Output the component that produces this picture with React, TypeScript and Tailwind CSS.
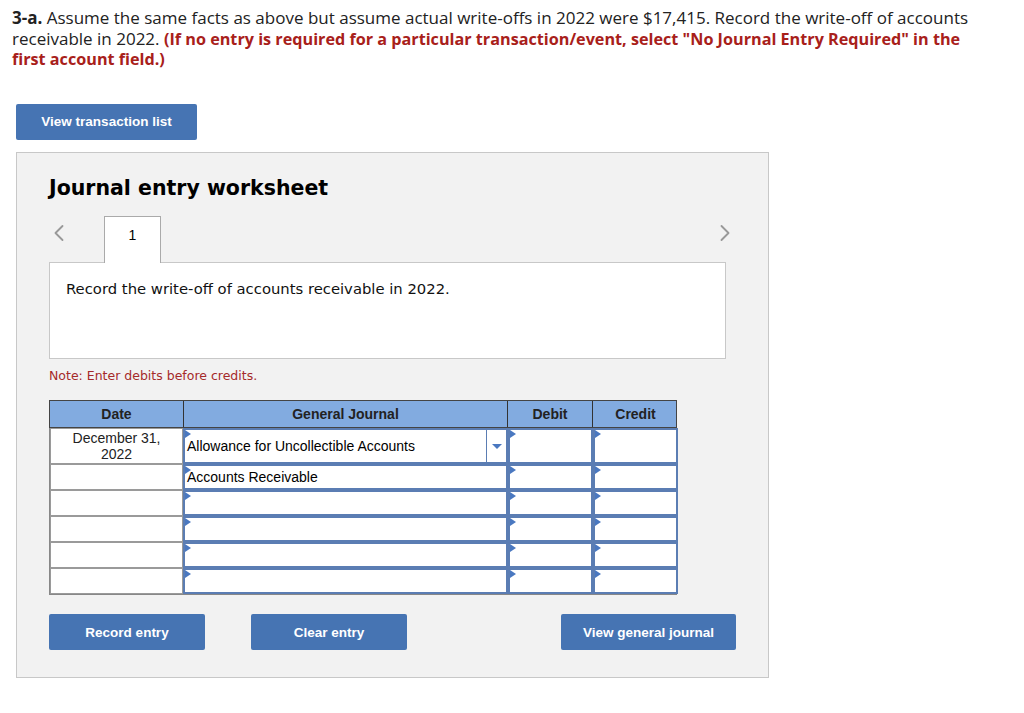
import { ChevronLeft, ChevronRight } from "lucide-react";

const rows = [
  { date: ["December 31,", "2022"], account: "Allowance for Uncollectible Accounts", dropdown: true },
  { date: null, account: "Accounts Receivable" },
  { date: null, account: "" },
  { date: null, account: "" },
  { date: null, account: "" },
  { date: null, account: "" },
];

function Marker() {
  return (
    <span className="absolute left-0 top-0 h-0 w-0 border-y-[4px] border-l-[6px] border-y-transparent border-l-[#4a78c0]" />
  );
}

function InputCell({ children, tall }: { children?: React.ReactNode; tall?: boolean }) {
  return (
    <div
      className={
        "relative flex items-center border-2 border-[#5b7db3] bg-white " + (tall ? "h-[36px]" : "h-[26px]")
      }
    >
      <Marker />
      {children}
    </div>
  );
}

function BlueButton({ label, className }: { label: string; className?: string }) {
  return (
    <button
      type="button"
      className={
        "flex h-[36px] items-center justify-center rounded-[2px] bg-[#4674b3] pt-[2px] text-[13.5px] font-bold text-white " +
        (className ?? "")
      }
      style={{ fontFamily: "'Liberation Sans', Arial, sans-serif" }}
    >
      {label}
    </button>
  );
}

export default function App() {
  return (
    <div className="min-h-[713px] w-[1024px] bg-white">
      <div
        className="px-[12px] pt-[8px] text-[17px] leading-[20.5px] text-[#222]"
        style={{ fontFamily: "'Open Sans', Lato, sans-serif" }}
      >
        <b>3-a.</b> Assume the same facts as above but assume actual write-offs in 2022 were $17,415. Record the
        write-off of accounts
        <br />
        receivable in 2022.{" "}
        <b className="text-[16.2px] text-[#a8201a]">
          (If no entry is required for a particular transaction/event, select "No Journal Entry Required" in the
          <br />
          first account field.)
        </b>
      </div>

      <div className="ml-[16px] mt-[34px]">
        <BlueButton label="View transaction list" className="w-[181px]" />
      </div>

      <div
        className="ml-[16px] mt-[12px] w-[753px] border border-[#c8c8c8] bg-[#f2f2f2] pb-[27px] pl-[32px] pt-[22px]"
        style={{ fontFamily: "'DejaVu Sans', Verdana, sans-serif" }}
      >
        <h2 className="text-[20.5px] font-bold leading-[26px] text-black">Journal entry worksheet</h2>

        <div className="mt-[15px] flex w-[676px] items-end">
          <div className="flex h-[46px] w-[55px] items-center pb-[12px]">
            <ChevronLeft className="-ml-[4px] h-[28px] w-[28px] text-[#999]" strokeWidth={1.6} />
          </div>
          <div
            className="-mb-px flex h-[47px] w-[57px] items-start justify-center border border-b-0 border-[#aaa] bg-white pt-[8px] text-[14px] text-black"
            style={{ fontFamily: "'Liberation Sans', Arial, sans-serif" }}
          >
            1
          </div>
          <div className="flex h-[46px] flex-1 items-center justify-end pb-[12px]">
            <ChevronRight className="mr-[-14px] h-[28px] w-[28px] text-[#999]" strokeWidth={1.6} />
          </div>
        </div>

        <div className="h-[97px] w-[677px] border border-[#c8c8c8] bg-white pl-[16px] pt-[15px] text-[14.8px] text-[#111]">
          Record the write-off of accounts receivable in 2022.
        </div>

        <p className="mt-[8px] text-[12.5px] text-[#a52a2a]">Note: Enter debits before credits.</p>

        <div className="mt-[15px] w-[628px] text-[#222]" style={{ fontFamily: "'Liberation Sans', Arial, sans-serif" }}>
          <div className="grid h-[28px] grid-cols-[134px_324px_85px_85px] border border-[#444] bg-[#82abe0] text-[14px] font-bold">
            <div className="flex items-center justify-center border-r border-[#333]">Date</div>
            <div className="flex items-center justify-center border-r border-[#333]">General Journal</div>
            <div className="flex items-center justify-center border-r border-[#333]">Debit</div>
            <div className="flex items-center justify-center">Credit</div>
          </div>
          <div className="border-x border-b border-[#888] bg-[#888]">
            {rows.map((r, i) => (
              <div key={i} className="grid grid-cols-[133px_325px_85px_85px]">
                <div
                  className={
                    "flex flex-col items-center justify-center border border-[#9a9a9a] bg-white text-[14px] leading-[16px] " +
                    (i === 0 ? "h-[36px]" : "h-[26px]")
                  }
                >
                  {r.date && (
                    <>
                      <span>{r.date[0]}</span>
                      <span>{r.date[1]}</span>
                    </>
                  )}
                </div>
                <InputCell tall={i === 0}>
                  <span className="pl-[2px] text-[14px] text-black">{r.account}</span>
                  {r.dropdown && (
                    <div className="ml-auto flex h-full w-[20px] items-center justify-center border-l border-[#5b7db3]">
                      <span className="h-0 w-0 border-x-[5px] border-t-[5px] border-x-transparent border-t-[#4a78c0]" />
                    </div>
                  )}
                </InputCell>
                <InputCell tall={i === 0} />
                <InputCell tall={i === 0} />
              </div>
            ))}
          </div>
        </div>

        <div className="mt-[19px] flex items-center">
          <BlueButton label="Record entry" className="w-[156px]" />
          <BlueButton label="Clear entry" className="ml-[46px] w-[156px]" />
          <BlueButton label="View general journal" className="ml-[154px] w-[175px]" />
        </div>
      </div>
    </div>
  );
}
